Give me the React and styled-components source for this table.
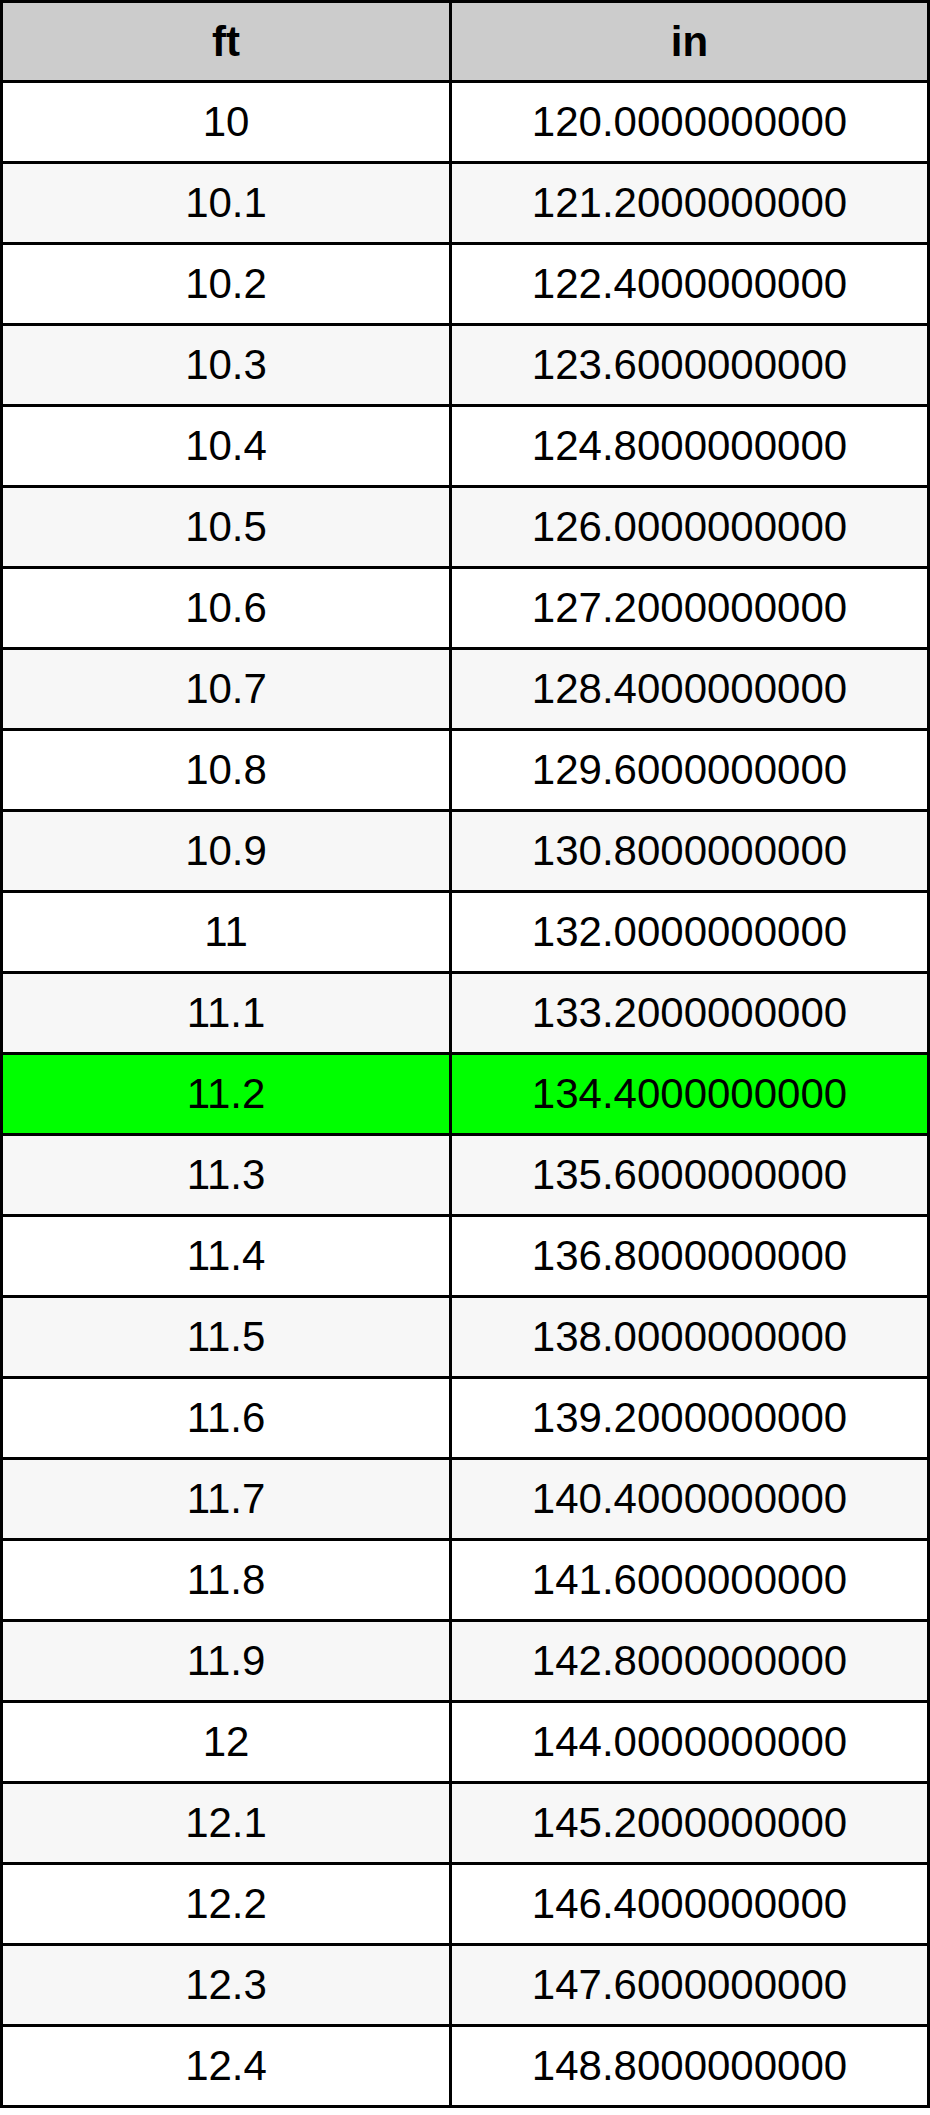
import React from 'react';
import styled, { createGlobalStyle } from 'styled-components';

const GlobalStyle = createGlobalStyle`
  body {
    margin: 0;
    background: #fff;
    font-family: "Liberation Sans", Arial, sans-serif;
  }
`;

const Table = styled.table`
  width: 930px;
  border-collapse: collapse;
  border: 3px solid #000;
  font-size: 42px;
  color: #000;
`;

const HeadCell = styled.th`
  background: #cccccc;
  border: 3px solid #000;
  height: 77px;
  padding: 0;
  font-weight: bold;
  text-align: center;
  width: ${(props) => props.width || 'auto'};
`;

const Row = styled.tr`
  background: ${(props) => {
    if (props.highlight) return '#00ff00';
    return props.odd ? '#f7f7f7' : '#ffffff';
  }};
`;

const Cell = styled.td`
  border: 3px solid #000;
  height: 78px;
  padding: 0;
  text-align: center;
  font-weight: normal;
`;

const rows = Array.from({ length: 25 }, (_, i) => {
  const ft = (100 + i) / 10;
  const inches = ((100 + i) * 12) / 10;
  return { ft: String(ft), inches: inches.toFixed(10) };
});

export default function App() {
  return (
    <>
      <GlobalStyle />
      <Table>
        <thead>
          <tr>
            <HeadCell width="446px">ft</HeadCell>
            <HeadCell>in</HeadCell>
          </tr>
        </thead>
        <tbody>
          {rows.map((row, i) => (
            <Row key={row.ft} odd={i % 2 === 1} highlight={row.ft === '11.2'}>
              <Cell>{row.ft}</Cell>
              <Cell>{row.inches}</Cell>
            </Row>
          ))}
        </tbody>
      </Table>
    </>
  );
}
